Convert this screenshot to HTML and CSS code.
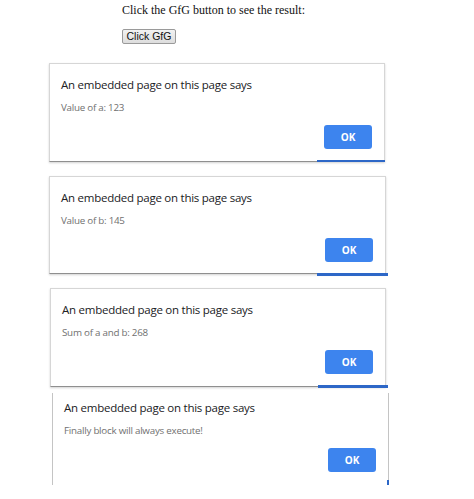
FILE: index.html
```html
<!DOCTYPE html>
<html>
<head>
<meta charset="utf-8">
<link rel="stylesheet" href="styles.css">
</head>
<body>
<div class="page">
  <p class="intro">Click the GfG button to see the result:</p>
  <button class="gfg">Click GfG</button>
</div>
<div class="stack">
  <div class="dialog d1">
    <div class="title">An embedded page on this page says</div>
    <div class="msg">Value of a: 123</div>
    <div class="actions"><button class="ok">OK</button></div>
  </div>
  <div class="dialog d2">
    <div class="title">An embedded page on this page says</div>
    <div class="msg">Value of b: 145</div>
    <div class="actions"><button class="ok">OK</button></div>
  </div>
  <div class="dialog d3">
    <div class="title">An embedded page on this page says</div>
    <div class="msg">Sum of a and b: 268</div>
    <div class="actions"><button class="ok">OK</button></div>
  </div>
  <div class="dialog d4">
    <div class="title">An embedded page on this page says</div>
    <div class="msg">Finally block will always execute!</div>
    <div class="actions"><button class="ok">OK</button></div>
  </div>
</div>
</body>
</html>
```
FILE: styles.css
```css
html, body {
  margin: 0;
  padding: 0;
  background: #ffffff;
}
.page {
  padding: 3px 0 0 122px;
  display: flex;
  flex-direction: column;
  align-items: flex-start;
}
.intro {
  margin: 0;
  font-family: "Liberation Serif", "Times New Roman", serif;
  font-size: 12px;
  line-height: 14px;
  color: #111;
}
.gfg {
  margin-top: 12px;
  width: 54px;
  height: 15px;
  padding: 0;
  font-family: "Liberation Sans", Arial, sans-serif;
  font-size: 10.5px;
  line-height: 13px;
  color: #111;
  background: linear-gradient(#f2f2f2, #dddddd);
  border: 1px solid #9a9a9a;
  border-radius: 2px;
}
.stack {
  display: flex;
  flex-direction: column;
  align-items: flex-start;
  padding-top: 19px;
}
.dialog {
  position: relative;
  box-sizing: border-box;
  width: 337px;
  height: 99px;
  background: #fff;
  border: 1px solid #d6d6d6;
  border-bottom-color: #8f8f8f;
  box-shadow: 0 1px 2px rgba(0,0,0,0.18);
  padding: 12px 12px 0 11px;
  font-family: "Open Sans", "Noto Sans", sans-serif;
  display: flex;
  flex-direction: column;
}
.dialog::after {
  content: "";
  position: absolute;
  background: #2d67c7;
}
.d1 { margin-left: 49px; width: 336px; }
.d1::after { left: 267px; right: -1px; bottom: -1px; height: 2px; }
.d2 { margin-left: 49px; margin-top: 14px; height: 98px; }
.d2::after { left: 267px; right: -3px; bottom: -3px; height: 3px; }
.d3 { margin-left: 50px; margin-top: 14px; width: 336px; }
.d3::after { left: 267px; right: -3px; bottom: -2px; height: 3px; }
.d4 {
  margin-left: 52px;
  margin-top: 6px;
  width: 337px;
  height: 92px;
  border-top: none;
  border-bottom: none;
  border-left-color: #c4c4c4;
  border-right-color: #c4c4c4;
  box-shadow: none;
  padding-top: 6px;
}
.d4::after { right: -1px; bottom: 0; width: 2px; height: 5px; }
.title {
  font-size: 11.5px;
  line-height: 18px;
  letter-spacing: -0.25px;
  color: #202124;
}
.msg {
  margin-top: 7px;
  font-size: 9.8px;
  line-height: 14px;
  letter-spacing: -0.25px;
  color: #707070;
}
.actions {
  margin-top: 10px;
  display: flex;
  justify-content: flex-end;
}
.ok {
  width: 48px;
  height: 24px;
  padding: 0;
  border: none;
  border-radius: 3px;
  background: #3d84ee;
  color: #fff;
  font-family: "Open Sans", "Noto Sans", sans-serif;
  font-weight: 700;
  font-size: 10px;
}
```
